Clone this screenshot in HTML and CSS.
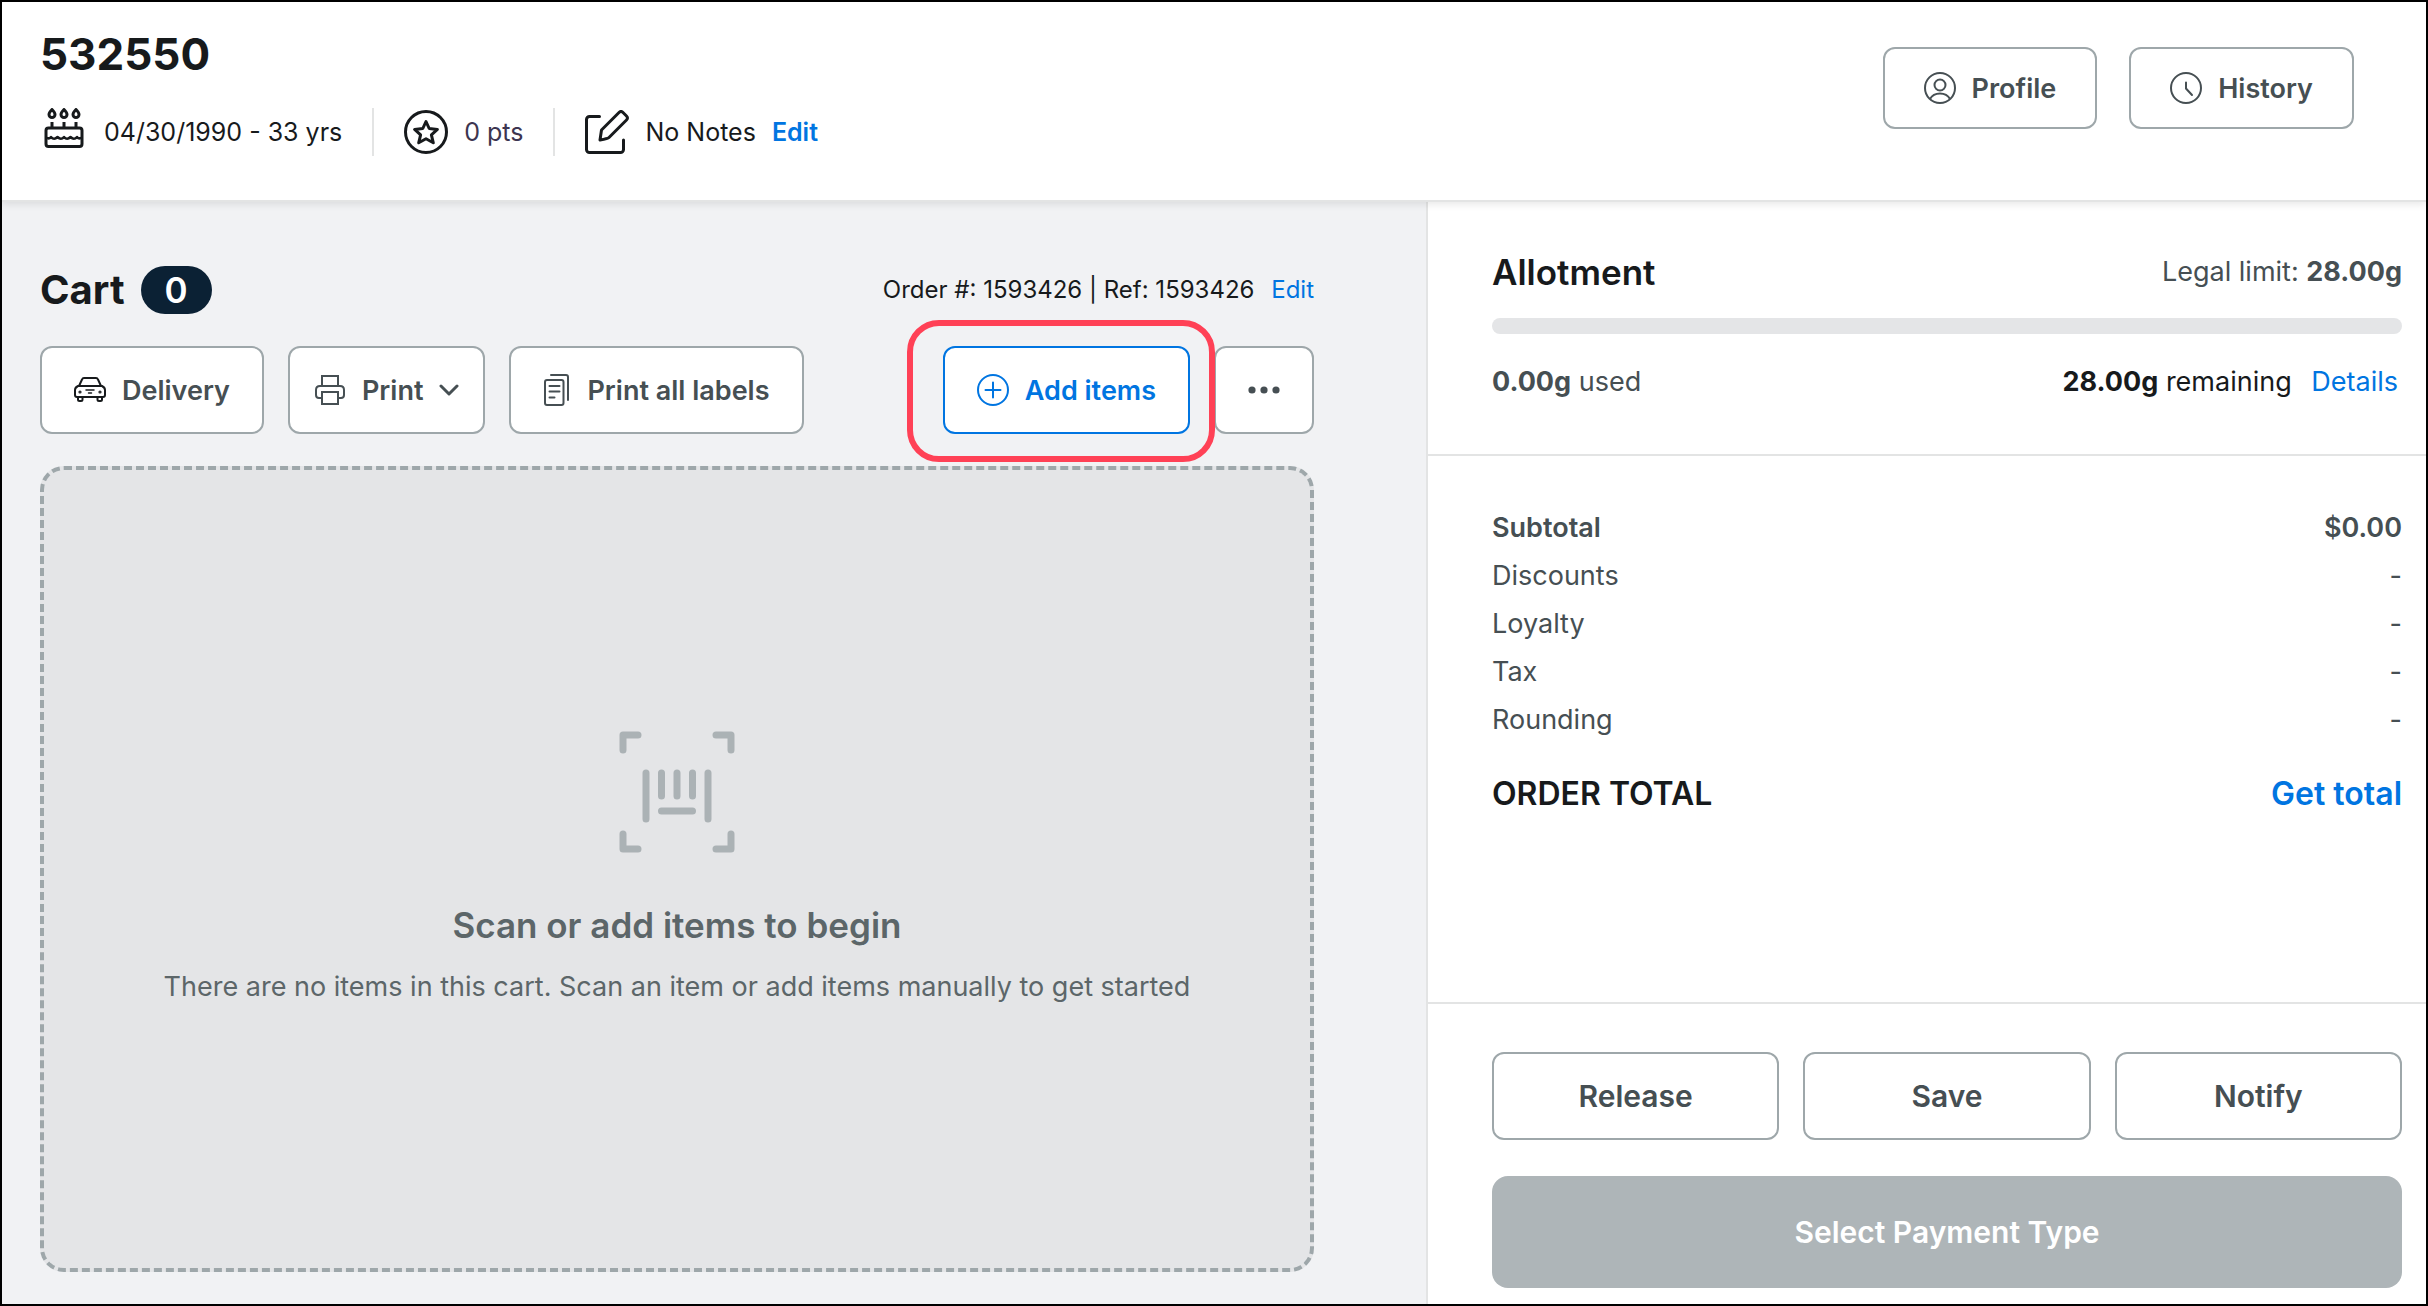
FILE: index.html
```html
<!DOCTYPE html>
<html lang="en">
	<head>
		<meta charset="utf-8" />
		<title>Cart</title>
		<link rel="stylesheet" href="styles.css">
	</head>
	<body>
		<div class="wrapper">
			<header class="header">
				<div class="customer">
					<h1>532550</h1>
					<ul class="info">
						<li class="birthday">
							<svg width="40" height="48" viewBox="0 0 40 48" fill="none" stroke="currentColor" stroke-width="3" stroke-linejoin="round">
								<rect x="2" y="20" width="36" height="18.500" rx="2.500"/>
								<path d="M8 14v6M20 14v6M32 14v6"/>
								<path d="M2 29.500q3 2 5-.5 3 3.500 6.500 0 3.500 3.500 6.500 0 3 3.500 6.500 0 3.500 3.500 6.500 0 2 2.500 5 .5" stroke-width="2.500"/>
								<path d="M8 1.500q3 3 3 5a3 3 0 0 1-6 0q0-2 3-5zM20 1.500q3 3 3 5a3 3 0 0 1-6 0q0-2 3-5zM32 1.500q3 3 3 5a3 3 0 0 1-6 0q0-2 3-5z"/>
							</svg>
							<span>04/30/1990 - 33 yrs</span>
						</li>
						<li class="points">
							<svg width="44" height="44" viewBox="0 0 44 44" fill="none" stroke="currentColor" stroke-width="3" stroke-linejoin="round">
								<circle cx="22" cy="22" r="20.500"/>
								<path d="M22 11.500l3.200 7 8.200.9-6 5.400 1.900 8-7.300-4-7.300 4 1.900-8-6-5.400 8.200-.9z"/>
							</svg>
							<span>0 pts</span>
						</li>
						<li class="notes">
							<svg width="44" height="44" viewBox="0 0 44 44" fill="none" stroke="currentColor" stroke-width="3" stroke-linejoin="round" stroke-linecap="round">
								<path d="M14.500 6.500H4.500a3 3 0 0 0-3 3v30a3 3 0 0 0 3 3h31a3 3 0 0 0 3-3V30"/>
								<path d="M15 30l1.500-10L34 2.500q2-2 4 0l3.500 3.500q2 2 0 4L24 27.500q-1 1-9 2.500z"/>
							</svg>
							<span>No Notes</span>
							<a href="#" class="edit">Edit</a>
						</li>
					</ul>
				</div>
				<div class="actions">
					<button type="button" class="btn">
						<svg width="32" height="32" viewBox="0 0 32 32" fill="none" stroke="currentColor" stroke-width="2">
							<circle cx="16" cy="16" r="15"/>
							<circle cx="16" cy="13" r="5.500"/>
							<path d="M6 27q3-5.500 10-5.500T26 27"/>
						</svg>
						Profile
					</button>
					<button type="button" class="btn">
						<svg width="32" height="32" viewBox="0 0 32 32" fill="none" stroke="currentColor" stroke-width="2" stroke-linecap="round">
							<circle cx="16" cy="16" r="15"/>
							<path d="M16 10.500v6l6 6.500"/>
						</svg>
						History
					</button>
				</div>
			</header>

			<div class="content">
				<main class="cart">
					<div class="cart-head">
						<h2>Cart</h2>
						<span class="count">0</span>
						<p class="order">Order #: 1593426 | Ref: 1593426 <a href="#">Edit</a></p>
					</div>

					<div class="toolbar">
						<button type="button" class="btn delivery">
							<svg width="32" height="32" viewBox="0 0 32 32" fill="none" stroke="currentColor" stroke-width="2" stroke-linejoin="round" stroke-linecap="round">
								<path d="M5 12l3-6.500q.6-1.500 2-1.500h12q1.400 0 2 1.500L27 12"/>
								<path d="M4 12h24q3 1.500 3 4v5q0 2-2 2H3q-2 0-2-2v-5q0-2.500 3-4z"/>
								<path d="M4 23v2.500q0 1.500 1.500 1.500H7q1.500 0 1.500-1.500V23M23.500 23v2.500q0 1.500 1.500 1.500h1.500q1.500 0 1.500-1.500V23"/>
								<path d="M12 16h8M14.500 19h3" stroke-width="1.500"/>
								<circle cx="6" cy="18" r=".6"/>
								<circle cx="26" cy="18" r=".6"/>
							</svg>
							Delivery
						</button>
						<button type="button" class="btn print">
							<svg width="32" height="32" viewBox="0 0 32 32" fill="none" stroke="currentColor" stroke-width="2">
								<path d="M8 12V2h16v10M8 24H5q-3 0-3-3v-5q0-4 4-4h20q4 0 4 4v5q0 3-3 3h-3"/>
								<path d="M8 18h16v12H8z"/>
							</svg>
							Print
							<svg class="arrow" width="20" height="12" viewBox="0 0 20 12" fill="none" stroke="currentColor" stroke-width="3" stroke-linecap="round" stroke-linejoin="round">
								<path d="M2 2l8 8 8-8"/>
							</svg>
						</button>
						<button type="button" class="btn labels">
							<svg width="28" height="32" viewBox="0 0 28 32" fill="none" stroke="currentColor" stroke-width="2" stroke-linejoin="round" stroke-linecap="round">
								<rect x="2" y="6" width="18.500" height="25" rx="2"/>
								<path d="M8 1h15q2 0 2 2v23"/>
								<path d="M6.500 12h10M6.500 17.500h10M6.500 23.500h5"/>
							</svg>
							Print all labels
						</button>
						<button type="button" class="btn add">
							<svg width="32" height="32" viewBox="0 0 32 32" fill="none" stroke="currentColor" stroke-width="2" stroke-linecap="round">
								<circle cx="16" cy="16" r="15"/>
								<path d="M16 8.500v15M8.500 16h15"/>
							</svg>
							Add items
						</button>
						<button type="button" class="btn more" aria-label="More">
							<svg width="32" height="8" viewBox="0 0 32 8" fill="currentColor">
								<circle cx="4" cy="4" r="3.600"/>
								<circle cx="16" cy="4" r="3.600"/>
								<circle cx="28" cy="4" r="3.600"/>
							</svg>
						</button>
					</div>

					<div class="empty">
						<svg width="116" height="122" viewBox="0 0 116 122" fill="none" stroke="currentColor" stroke-width="7" stroke-linecap="round" stroke-linejoin="round">
							<path d="M4 19V4h15M97 4h15v15M112 103v15H97M19 118H4v-15"/>
							<path d="M27 42v46M42.500 42v23M58 42v23M73.500 42v23M89 42v46M42.500 80h31"/>
						</svg>
						<h3>Scan or add items to begin</h3>
						<p>There are no items in this cart. Scan an item or add items manually to get started</p>
					</div>
				</main>

				<aside class="side">
					<section class="allotment">
						<div class="row">
							<h2>Allotment</h2>
							<p>Legal limit: <b>28.00g</b></p>
						</div>
						<div class="bar"></div>
						<div class="row used">
							<p><b>0.00g</b> used</p>
							<p class="remaining"><b>28.00g</b> remaining <a href="#">Details</a></p>
						</div>
					</section>

					<section class="totals">
						<dl>
							<div class="row subtotal"><dt>Subtotal</dt><dd>$0.00</dd></div>
							<div class="row"><dt>Discounts</dt><dd>-</dd></div>
							<div class="row"><dt>Loyalty</dt><dd>-</dd></div>
							<div class="row"><dt>Tax</dt><dd>-</dd></div>
							<div class="row"><dt>Rounding</dt><dd>-</dd></div>
							<div class="row total"><dt>ORDER TOTAL</dt><dd><a href="#">Get total</a></dd></div>
						</dl>
					</section>

					<section class="checkout">
						<div class="checkout-btns">
							<button type="button" class="btn">Release</button>
							<button type="button" class="btn">Save</button>
							<button type="button" class="btn">Notify</button>
						</div>
						<button type="button" class="pay">Select Payment Type</button>
					</section>
				</aside>
			</div>
		</div>
	</body>
</html>
```
FILE: styles.css
```css
*{
	padding: 0;
	margin: 0;
	box-sizing: border-box;
}
body{
	font-family: Inter, "Liberation Sans", sans-serif;
	font-size: 27px;
	line-height: 32px;
	color: #171a1c;
	background: #fff;
}
li{
	list-style: none;
}
a{
	color: #0075e1;
	text-decoration: none;
}
svg{
	display: block;
	flex: none;
}
button{
	font-family: inherit;
	cursor: pointer;
}
.wrapper{
	display: flex;
	flex-direction: column;
	min-height: 100vh;
	border: 2px solid #000;
}

/*header*/
.header{
	display: flex;
	justify-content: space-between;
	align-items: flex-start;
	padding: 24px 72px 44px 38px;
	border-bottom: 2px solid #e3e4e4;
	box-shadow: 0 2px 8px rgba(0,0,0,0.1);
	position: relative;
}
.header h1{
	font-size: 44px;
	line-height: 56px;
	margin-bottom: 26px;
}
.info{
	display: flex;
	font-size: 25px;
}
.info li{
	display: flex;
	align-items: center;
	gap: 16px;
	height: 48px;
	padding: 0 30px;
}
.info li + li{
	border-left: 2px solid #e3e4e4;
}
.info .birthday{
	gap: 20px;
	padding-left: 4px;
}
.points span{
	color: #3d3550;
}
.edit{
	font-weight: 600;
}
.actions{
	display: flex;
	gap: 32px;
	margin-top: 21px;
}
.btn{
	display: flex;
	align-items: center;
	justify-content: center;
	gap: 16px;
	height: 88px;
	padding: 0 32px;
	border: 2px solid #9ea7aa;
	border-radius: 12px;
	background: #fff;
	font-size: 27px;
	font-weight: 600;
	color: #464f53;
	white-space: nowrap;
}
.actions .btn{
	height: 82px;
	padding: 0 39px;
}

.content{
	display: grid;
	grid-template-columns: minmax(0, 178fr) minmax(0, 125fr);
	flex: 1;
}

/*cart*/
.cart{
	display: flex;
	flex-direction: column;
	gap: 32px;
	padding: 64px 112px 32px 38px;
	background: #f1f2f4;
}
.cart-head{
	display: flex;
	align-items: center;
}
.cart-head h2{
	font-size: 40px;
	line-height: 48px;
}
.count{
	width: 71px;
	height: 48px;
	margin-left: 16px;
	border-radius: 24px;
	background: #0b2134;
	color: #fff;
	font-size: 35px;
	font-weight: 600;
	line-height: 48px;
	text-align: center;
}
.order{
	margin-left: auto;
	font-size: 24px;
}
.order a{
	margin-left: 10px;
}
.toolbar{
	display: flex;
	gap: 24px;
}
.delivery svg{
	color: #171a1c;
}
.toolbar .print{
	padding: 0 24px;
}
.toolbar .add{
	position: relative;
	margin-left: auto;
	border-color: #0075e1;
	color: #0075e1;
}
/*highlight ring round the add button*/
.add::after{
	content: "";
	position: absolute;
	z-index: 1;
	inset: -28px -27px -30px -38px;
	border: 6px solid #ff4156;
	border-radius: 32px;
	pointer-events: none;
}
.empty{
	display: flex;
	flex: 1;
	flex-direction: column;
	align-items: center;
	justify-content: center;
	padding-bottom: 4px;
	border: 4px dashed #9ea7aa;
	border-radius: 24px;
	background: #e4e5e7;
	color: #5c6669;
	text-align: center;
}
.empty svg{
	color: #abb2b5;
}
.empty h3{
	margin: 48px 0 22px;
	font-size: 35px;
	font-weight: 600;
	line-height: 48px;
}

/*right side*/
.side{
	display: flex;
	flex-direction: column;
	border-left: 2px solid #e3e4e4;
	color: #464f53;
}
.row{
	display: flex;
	justify-content: space-between;
	align-items: center;
}
.allotment{
	padding: 46px 24px 56px 64px;
	border-bottom: 2px solid #e3e4e4;
}
.allotment h2{
	font-size: 35px;
	font-weight: 600;
	line-height: 48px;
	color: #171a1c;
}
.bar{
	height: 16px;
	margin: 22px 0 32px;
	border-radius: 8px;
	background: #e4e5e7;
}
.remaining{
	padding-right: 4px;
	color: #171a1c;
}
.remaining a{
	margin-left: 12px;
}
.totals{
	flex: 1;
	padding: 48px 24px 48px 64px;
	line-height: 48px;
}
.subtotal{
	font-weight: 600;
}
.total{
	margin-top: 26px;
	font-size: 32px;
	font-weight: 600;
	color: #171a1c;
}
.checkout{
	padding: 48px 24px 16px 64px;
	border-top: 2px solid #e3e4e4;
}
.checkout-btns{
	display: grid;
	grid-template-columns: repeat(3, 1fr);
	gap: 24px;
	margin-bottom: 36px;
}
.checkout-btns .btn{
	font-size: 30px;
}
.pay{
	display: block;
	width: 100%;
	height: 112px;
	border: 0;
	border-radius: 16px;
	background: #aeb5b8;
	color: #fff;
	font-size: 30px;
	font-weight: 600;
}
```
